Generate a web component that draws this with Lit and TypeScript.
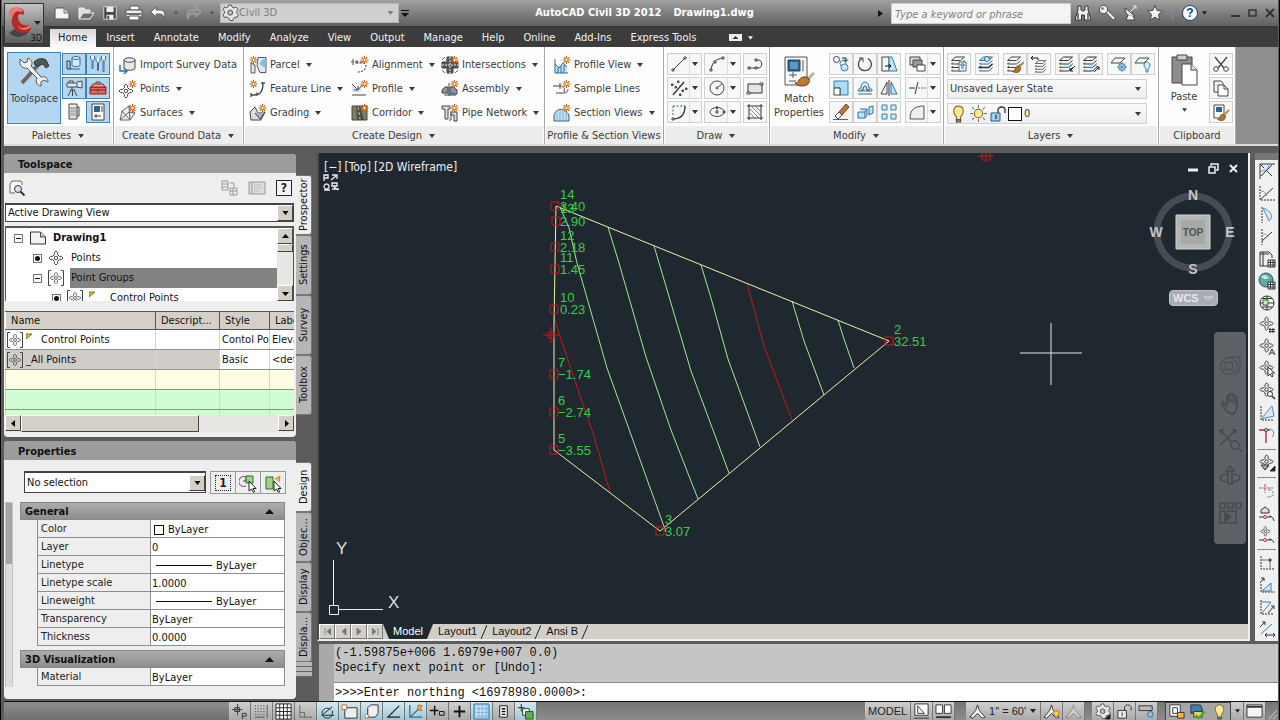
import { LitElement, html, svg, css, SVGTemplateResult, TemplateResult } from "lit";
import { customElement } from "lit/decorators.js";
import { classMap } from "lit/directives/class-map.js";

const spark = svg`<path d="M13.5 0v8M9.5 4h8M10.7 1.2l5.6 5.6M16.3 1.2l-5.6 5.6" stroke="#c8641a" stroke-width="1.1"/><circle cx="13.5" cy="4" r="1.4" fill="#fff6c8" stroke="#d8862e" stroke-width=".6"/>`;
const layers = svg`<path d="M5.5 2h9l-4 3.5h-9z"/><path d="M3 7.5L1.5 9h9l4-3.5M3 11l-1.5 1.5h9l4-3.5M3 14.5L1.5 16h9l4-3.5" fill="none"/>`;
const target = svg`<circle cx="9" cy="9" r="1.8"/><path d="M9 2l1.6 1.6v2L12.4 7.4h2L16 9l-1.6 1.6h-2l-1.8 1.8v2L9 16l-1.6-1.6v-2L5.6 10.6h-2L2 9l1.6-1.6h2L7.4 5.6v-2z"/>`;
const brush = svg`<path d="M17 6l-5 5" stroke="#b98b53" stroke-width="2"/><path d="M8 13c0-2 2-3 4-2.5l1.5 1.5c.5 2-1 4-3 4.5-2 .3-4-.5-5-1 2 0 2.5-1 2.5-2.5z" fill="#b5712c" stroke="#6b4218" stroke-width=".7"/>`;

const glyphs: Record<string, SVGTemplateResult> = {
  newFile: svg`<path d="M2 4h9l5 5v6H2z" fill="#f4f4f4" stroke="#555"/><path d="M11 4v5h5" fill="#ccc" stroke="#777"/>`,
  open: svg`<path d="M2 14V4h5l1.5 2H13v2" fill="#ddd" stroke="#eee"/><path d="M2 15l4-6h11l-4 6z" fill="#6d6d6d" stroke="#f4f4f4"/>`,
  save: svg`<path d="M2 2h14v14H2z" fill="#444" stroke="#ddd"/><path d="M5 2h8v6H5zM5 11h8v5H5z" fill="#eee" stroke="none"/><path d="M7 12v4" stroke="#444" stroke-width="2"/>`,
  print: svg`<path d="M5 2h9v4H5z" fill="#fff" stroke="#555"/><path d="M1 6h16v7H1z" fill="#eee" stroke="#555"/><path d="M2 10h14" stroke="#444" stroke-width="1.5"/><path d="M4 12h10v4H4z" fill="#fff" stroke="#555"/>`,
  undo: svg`<path d="M7 3L2 8l5 5v-3h4c3 0 4 2 4 5 2-5 0-9-4-9H7z" fill="#f4f4f4" stroke="#555" stroke-width=".8"/>`,
  redo: svg`<path d="M11 3l5 5-5 5v-3H7c-3 0-4 2-4 5-2-5 0-9 4-9h4z" fill="#8b8b8b" stroke="#b5b5b5" stroke-width=".8"/>`,
  gear: svg`<path d="M7.5 1h3l.5 2 2 1 2-1 2 2.5-1.2 1.8.2 2 1.5 1.5-1.5 2.5-2-.3-1.5 1.3-.5 2.2h-3L7.5 14l-1.8-1-2.2.5L2 11l1.5-1.7v-2L2 5.5 3.7 3l2 .8L7 3z" fill="#e6e6e6" stroke="#555"/><circle cx="9.2" cy="8.7" r="2.5" fill="#bbb" stroke="#555"/>`,
  binoculars: svg`<path d="M4 2h3v4l1.5 1h1L11 6V2h3v4l2.5 8v2h-6v-5h-3v5h-6v-2L4 6z" fill="#eee" stroke="#333"/><path d="M4 9v6M14 9v6" stroke="#555" stroke-width="1.5"/>`,
  key: svg`<path d="M8 8.5l7 7.5h2v-2.5L10 6.5" fill="#eee" stroke="#444"/><circle cx="5.5" cy="5.5" r="4.2" fill="#eee" stroke="#444"/><circle cx="4.5" cy="4.5" r="1.2" fill="#666" stroke="none"/>`,
  dish: svg`<path d="M3 4c0 6 4 9 10 8z" fill="#eee" stroke="#444"/><path d="M8 8l6-6M14 5V2h-3" stroke="#eee"/><path d="M6 11l-2 5h9l-2-4" fill="#eee" stroke="#444"/>`,
  star: svg`<path d="M9 1.5l2.2 5 5.3.5-4 3.6 1.2 5.4L9 13.2 4.3 16l1.2-5.4L1.5 7l5.3-.5z" fill="#f2f2f2" stroke="#444"/>`,
  survey: svg`<path d="M2 6v8h4M2 6h3v8" stroke="#333"/><path d="M7 3c0-2 8-2 8 0v7c0 2-8 2-8 0z" fill="#d3ebfa" stroke="#2e6f9c"/><path d="M7 3c0 2 8 2 8 0M6 14h9" stroke="#2e6f9c"/>`,
  pens: svg`<path d="M1.5 1v3L3 5.5v8h1v-8L5.5 4V1M7 3v3l1.5 1.5v8h1v-8L11 6V3M12.5 1v3L14 5.5v11h1v-11L16.5 4V1" stroke="#3b6f94" fill="#e7f4fc"/>`,
  transit: svg`<path d="M2 4h10v4H2zM12 3l5-1v7l-5-1M4 4V2h4v2" fill="#dcecf5"/><path d="M7 8v3M5 11h5M6 11l-3 6M9 11l3 6M7.5 11v6"/>`,
  toolbox: svg`<path d="M1 8h16v7H1z" fill="#e06a60" stroke="#7a231e"/><path d="M2 8l2-3h10l2 3z" fill="#f0a59d" stroke="#7a231e"/><path d="M7 5V3h4v2M1 11h16M9 10v3" stroke="#7a231e"/>`,
  panorama: svg`<path d="M4 1h8v15H4zM12 4h2v9h-2" fill="#eee"/><path d="M6 4v10M8 4v10M10 4v10M5 5h6M5 8h6M5 11h6" stroke="#888" stroke-width=".7"/>`,
  props: svg`<path d="M3 1h12v16H3z" fill="#fff"/><path d="M5 3h6v6H5z" fill="#2d6391" stroke="none"/><path d="M5 13h7M7 11v4M13 3v6" stroke="#444"/>`,
  importSurvey: svg`<path d="M5 4c0-3 11-3 11 0v8c0 3-11 3-11 0z" fill="#e7e7e7"/><path d="M5 4c0 3 11 3 11 0"/><path d="M1 9v6h6M5 12l3 3-3 3" stroke="#2873ab" stroke-width="1.5"/>`,
  points: svg`<g transform="translate(-2 2)">${target}</g>${spark}`,
  surface: svg`<path d="M1 16l2-9 7-5 6 7-5 7zM3 7l8 9M10 2l1 14M1 16L10 8l6 1" fill="#eee" stroke="#666"/>${spark}`,
  parcel: svg`<path d="M2 7l4 2v8H2zM9 1.5h8v15h-6L8 10z" fill="#dfe8ec" stroke="#556"/><path d="M10 8l4-5h2.5v9z" fill="#7cc3e8" stroke="none"/><g transform="translate(-9 0)">${spark}</g>`,
  feature: svg`<path d="M2 15h4c6 0 8-4 8-12M12 3h4M2 13v4" stroke-width="1.3"/><circle cx="8" cy="14" r="1"/><g transform="translate(-9 0)">${spark}</g>`,
  grading: svg`<path d="M1 8l5-5 3 6 7-1-4 8H2z" fill="#d7dde0"/><path d="M6 9l5 6 5-7" fill="#aab3b8"/>${spark}`,
  alignment: svg`<path d="M0 6h5M9 6h3M2 3v6" stroke-dasharray="3 1"/><path d="M5 7h6c4 0 5 3 3 6-2 3-5 3-8 3" stroke="#333" stroke-dasharray="2 1.5"/><circle cx="6" cy="6" r="1.2" fill="#fff"/>${spark}`,
  profile: svg`<path d="M1 5l5 5 4-3v5H1z" fill="#cfe6f5" stroke="none"/><path d="M1 4l6 6 4-5M7 10v-4M7 10h-4M1 15h14"/>${spark}`,
  corridor: svg`<path d="M1 2h15v14H1z" fill="#76806b" stroke="#444"/><path d="M5 2h4l4 14H6z" fill="#4a4a4a" stroke="none"/><path d="M7 3l2 12" stroke="#e6d83f" stroke-dasharray="3 2"/>${spark}`,
  intersection: svg`<path d="M6 1h6v5h5v6h-5v5H6v-5H1V6h5z" fill="#555" stroke="#444"/><path d="M9 1v16M1 9h16" stroke="#eee" stroke-dasharray="2 1"/><path d="M1 4l3-3M1 14l3 3M14 17l3-3" stroke="#2e7fb5"/>${spark}`,
  assembly: svg`<path d="M1 10l3-3h3v6H1zM9 7h3l4 3v4H9z" fill="#8b97a0"/><path d="M8 3v13M3 15h12" /><path d="M4 13h8" stroke="#2e7fb5"/>${spark}`,
  pipe: svg`<path d="M1 2h8v3H7v10H4V5H1zM9 8h7v9h-3v-6h-4" fill="#ddd"/><path d="M10 8v8H8" />${spark}`,
  profileView: svg`<path d="M2 8l4 4 4-5 4 4v6H2z" fill="#bfe0f4" stroke="none"/><path d="M2 3v14h13M2 8l4 4 4-5 4 4M5 12v5M8 10v7M11 9v8" stroke="#2f6d97"/>${spark}`,
  sample: svg`<path d="M0 6h7c4 0 5 3 4 6M3 13h8c4 0 4-4 4-4M7 3v6" stroke="#444"/>${spark}`,
  sectionViews: svg`<path d="M1 12c1-8 10-9 15-1v6H1z" fill="#bfe0f4" stroke="#456"/><path d="M4 9v8M7 7v10M10 7v10M13 9v8" stroke="#7fb3d4"/>${spark}`,
  line: svg`<path d="M3 15L15 3" stroke="#333"/><path d="M2 14h2v2H2zM14 2h2v2h-2z" fill="#fff"/>`,
  polyarc: svg`<path d="M3 15C4 7 8 4 15 3" stroke="#333"/><path d="M2 14h2v2H2zM6 6h2v2H6zM14 2h2v2h-2z" fill="#fff"/>`,
  pline: svg`<path d="M3 13h9c5 0 5-8 0-8H10" stroke="#333"/><path d="M2 12h2v2H2zM9 12h2v2H9zM9 4h2v2H9z" fill="#fff"/>`,
  multi: svg`<path d="M3 16L14 3" stroke="#333" stroke-width="1.3"/><path d="M1.5 5h1.500v1.500H1.500zM7.500 2h1.500v1.500H7.500zM5 7.500h1.500V9H5zM12 11h1.500v1.500H12zM15.500 9H17v1.500h-1.500zM9.500 15H11v1.500H9.500z" stroke="#333"/>`,
  circle: svg`<circle cx="9" cy="9" r="7" stroke="#444"/><circle cx="9" cy="9" r="1"/><path d="M10 8l4-3"/>`,
  rect: svg`<path d="M2 5h14v9H2z" fill="#e4e4e4" stroke="#333"/><path d="M1 13h3v2H1zM14 4h3v2h-3z" fill="#fff"/>`,
  arcDash: svg`<path d="M3 3h12M3 3v9" stroke="#2f6d97" stroke-dasharray="2 1.5"/><path d="M3 16c8 0 12-4 12-13" stroke="#333" stroke-width="1.3"/><path d="M2 15h2v2H2z" fill="#fff"/>`,
  ellipse: svg`<ellipse cx="9" cy="9" rx="7" ry="4.5"/><path d="M9 6v5M7 9h4M15 8h2v2h-2z"/><circle cx="9" cy="4.5" r="1"/>`,
  hatch: svg`<path d="M3 1v16M15 1v16M1 3h16M1 15h16" stroke="#333"/><path d="M4 10l5 5M4 6l9 9M6 4l9 9M10 4l5 5" stroke="#888"/>`,
  move: svg`<circle cx="4.5" cy="4.5" r="3"/><circle cx="11" cy="8.5" r="3" stroke="#2e7fb5"/><circle cx="12.5" cy="12.5" r="3.5" fill="#cdeafb" stroke="#2e7fb5"/><path d="M10 3h4v3M12 4.500l2 2 2-2" stroke="#222"/>`,
  rotate: svg`<path d="M12 3.5A6.500 6.500 0 1 1 6 3.400" stroke="#444" stroke-width="1.3"/><path d="M3 3h4v4" stroke="#444"/>`,
  stretch: svg`<path d="M2 2h7v14H2z"/><path d="M9 2h3l5 14H9z" fill="#bfe3f8" stroke="#2e7fb5"/><path d="M5 11h6M9 9l2 2-2 2" stroke="#111"/>`,
  front: svg`<path d="M2 2h10v8H2z" fill="#ddd"/><path d="M5 5h9v7H5z" fill="#9a9a9a"/><path d="M9 10h8v6H9z" fill="#fff"/>`,
  scale: svg`<path d="M2 2h14v14H8V9H2z" fill="#aedcf5" stroke="#2e7fb5"/><path d="M2 9h6v7H2z" fill="#fff"/>`,
  offset: svg`<path d="M2 15h14M2 12c0-2 2-3 3-3 0-8 8-8 8 0 2 0 3 1 3 3z" fill="#c9e6f7" stroke="#2e6f9c"/><path d="M5 12c0-1 1-1 2-1 0-5 4-5 4 0h3" stroke="#333"/>`,
  mirror: svg`<path d="M7 3v12H1z" fill="#f2f2f2"/><path d="M11 3v12h6z" fill="#bfe3f8" stroke="#2e6f9c"/><path d="M9 1v16" stroke="#333"/>`,
  trim: svg`<path d="M1 9h6M7 15l3-12" stroke="#333"/><path d="M10 9h8" stroke="#2e7fb5" stroke-dasharray="2 1"/>`,
  erase: svg`<path d="M1 16.5h15" stroke="#c33"/><path d="M3 13l4-4 3 3-4 4z" fill="#fff"/><path d="M7 9l7-8 3 3-7 8z" fill="#b07a40" stroke="#6b4218"/>`,
  explode: svg`<path d="M2 9h7v6H2zM4 6h7l-2 3M11 6v6l-2 3M13 4l4-1v7l-4 2z" fill="#bfe3f8" stroke="#2e6f9c"/>`,
  array: svg`<path d="M2 2h5v5H2zM11 2h5v5h-5zM2 11h5v5H2zM11 11h5v5h-5z" fill="#d6eefb" stroke="#2e7fb5"/>`,
  fillet: svg`<path d="M2 16C2 7 6 3 16 3v13z" fill="#eee" stroke="#555"/>`,
  layerProps: svg`<g stroke="#444">${layers}</g><path d="M9 7h7v9H9z" fill="#fff" stroke="#2f6d97"/><path d="M11 9h3v2h-3zM11 13h3" stroke="#2f6d97"/>`,
  layerMatch: svg`<g stroke="#2e6f9c" fill="#bfe3f8">${layers}</g><path d="M3 11l-1.5 1.5h9l4-3.5" stroke="#333" stroke-width="1.5"/><circle cx="9" cy="4" r="2.5" fill="#cfeafa" stroke="#2e6f9c"/>`,
  layerPaint: svg`<g stroke="#444">${layers}</g><g transform="translate(1 1)">${brush}</g>`,
  layerPrev: svg`<g transform="translate(4 4) scale(.82)" stroke="#444">${layers}</g><path d="M8 5V3H1M3 1L1 3l2 2" stroke="#111"/>`,
  layerIso: svg`<g stroke="#333">${layers}</g><path d="M3 11l-1.5 1.5h9l4-3.5" stroke="#2e7fb5" fill="#bfe3f8"/><path d="M17 11l-5 5M12 13v3h3" stroke="#111"/>`,
  layerUniso: svg`<g stroke="#333">${layers}</g><path d="M3 11l-1.5 1.5h9l4-3.5" stroke="#2e7fb5" fill="#bfe3f8"/><path d="M12 17l5-5M14 12h3v3" stroke="#111"/>`,
  layerFreeze: svg`<path d="M5 3h10l-5 5H1z"/><circle cx="12" cy="12" r="3.5" stroke="#2e7fb5" fill="#d8effb"/><path d="M12 7v10M7 12h10M8.5 8.5l7 7M15.5 8.5l-7 7" stroke="#2e7fb5" stroke-width=".7"/>`,
  layerOff: svg`<path d="M5 3h10l-5 5H1z"/><path d="M12 14c-4-4-1-7 1-7s5 3 1 7v3h-2z" fill="#d8effb" stroke="#2e7fb5"/>`,
  bulb: svg`<path d="M7 12C3 8 4 2 9 2s6 6 2 10v3H7z" fill="#fbe98f" stroke="#7a6a2c"/><path d="M7 15h4v2H7z" fill="#999"/>`,
  sun: svg`<circle cx="9" cy="9" r="4" fill="#fbe98f" stroke="#7a6a2c"/><path d="M9 1v3M9 14v3M1 9h3M14 9h3M3 3l2 2M13 13l2 2M15 3l-2 2M5 13l-2 2" stroke="#777"/>`,
  unlock: svg`<path d="M2 8h9v8H2z" fill="#9ed3f0" stroke="#1e5f8c"/><path d="M9 8V5c0-4 7-4 7 0v3M7 10v4" stroke="#333" stroke-width="1.3"/>`,
  cut: svg`<path d="M3 2l9 11M15 2L6 13" stroke="#444" stroke-width="1.3"/><circle cx="4" cy="14" r="2.3"/><circle cx="14" cy="14" r="2.3"/>`,
  copy: svg`<path d="M2 2h7l2 2v9H2z" fill="#f2f2f2"/><path d="M6 6h6l4 4v7H6z" fill="#fff"/><path d="M12 6v4h4"/>`,
  matchSmall: svg`<path d="M2 2h10v13H2z" fill="#fff"/><path d="M4 4h6v5H4z" fill="#2d6391" stroke="none"/><g transform="translate(0 1)">${brush}</g>`,
  point: target,
  pointGroup: svg`<path d="M4 1.5H1.5v15H4M14 1.5h2.5v15H14"/><g transform="translate(1.6 1.6) scale(.82)">${target}</g>`,
  drawing: svg`<path d="M1.5 3h10l5 5v7h-15z" fill="#f2f2f2" stroke="#333"/><path d="M11.5 3v5h5" fill="#ccc"/>`,
  preview: svg`<path d="M14 6V3l-1-1H4L2 5v9h5" fill="#f8f8f8" stroke="#666"/><circle cx="10" cy="10" r="3.5" fill="#dde" stroke="#333"/><path d="M12.5 12.5l4 4" stroke="#333" stroke-width="2"/>`,
  panorama2: svg`<path d="M1 2h6v9H1zM1 5h6M1 8h6M9 9h7v7H9zM9 12h7M12 9v7M9 4h4v4" stroke="#999"/>`,
  card: svg`<path d="M1 3h16v12H1zM4 3v12" fill="#ddd" stroke="#999"/><path d="M6 6h8M6 9h8M6 12h5" stroke="#bbb"/>`,
  help: svg`<path d="M1.5 1.5h15v15h-15z" fill="#f2f2f2" stroke="#222"/>`,
  selCycle: svg`<path d="M7 3a5 5 0 1 0 0 9M7 3v4H4" stroke="#444"/><path d="M7 2h7v7H7z" fill="#9fd28b" stroke="#356b2a"/>`,
  cursor: svg`<path d="M9 6v10l2.5-2 2 3.5 1.200-.8-1.700-3.200h3z" fill="#fff" stroke="#222"/>`,
};

const icon = (name: string, size = 18): TemplateResult => html`<svg
  class="ic" width=${size} height=${size} viewBox="0 0 18 18" fill="none" stroke="#444" aria-hidden="true"
>${glyphs[name]}</svg>`;

const caret = (size = 5): TemplateResult =>
  html`<svg class="caret" width=${size + 1} height="4" viewBox="0 0 6 4" aria-hidden="true"><path d="M0 0h6L3 4z" fill="currentColor"/></svg>`;

type Cmd = [icon: string, label: string, drop: boolean];

const menuTabs = ["Home", "Insert", "Annotate", "Modify", "Analyze", "View", "Output", "Manage", "Help", "Online", "Add-Ins", "Express Tools"];
const groundData: Cmd[] = [["importSurvey", "Import Survey Data", false], ["points", "Points", true], ["surface", "Surfaces", true]];
const design: Cmd[] = [
  ["parcel", "Parcel", true], ["feature", "Feature Line", true], ["grading", "Grading", true],
  ["alignment", "Alignment", true], ["profile", "Profile", true], ["corridor", "Corridor", true],
  ["intersection", "Intersections", true], ["assembly", "Assembly", true], ["pipe", "Pipe Network", true],
];
const views: Cmd[] = [["profileView", "Profile View", true], ["sample", "Sample Lines", false], ["sectionViews", "Section Views", true]];
const palettes: [string, string, boolean][] = [
  ["survey", "Prospector", true], ["pens", "Settings", true], ["transit", "Survey", true],
  ["toolbox", "Toolbox", true], ["panorama", "Panorama", false], ["props", "Properties", true],
];
const properties: [string, string, string][] = [
  ["Color", "swatch", "ByLayer"], ["Layer", "", "0"], ["Linetype", "rule", "ByLayer"], ["Linetype scale", "", "1.0000"],
  ["Lineweight", "rule", "ByLayer"], ["Transparency", "", "ByLayer"], ["Thickness", "", "0.0000"],
];

/* Survey points: node x, node y, point number, elevation, label x */
const nodes: [number, number, string, string, number][] = [
  [236, 53, "14", "3.40", 241], [237, 68, "", "2.90", 241], [236, 94, "12", "2.18", 241], [236, 116, "11", "1.45", 241],
  [235, 156, "10", "0.23", 241], [235, 221, "7", "−1.74", 239], [235, 259, "6", "−2.74", 239],
  [235, 297, "5", "−3.55", 239], [341, 378, "3", "3.07", 346], [570, 188, "2", "32.51", 575],
];
const contours: [string, boolean][] = [
  ["M241 54L250 75 258 110 288 215 347 379", false], ["M289 74L300 110 327 204 352 277 379 346", false],
  ["M335 93L346 130 372 218 410 320", false], ["M382 112L392 145 409 206 441 294", false],
  ["M428 130L445 193 473 267", true], ["M473 148L485 188 505 242", false], ["M519 167L525 186 535 215", false],
  ["M235 165L255 225 274 280 291 339", true],
];

const miniPoint = svg`<g transform="translate(0 -1) scale(.95)">${target}</g>`;
const sideTools: (SVGTemplateResult | null)[] = [
  svg`<path d="M2 17V2h15M2 2l12 12" /><path d="M3 9c4 1 8-2 8-7" fill="#cfe3f7" stroke="#6c9cc9"/><path d="M3 14L14 3"/>`,
  svg`<path d="M2 2v14h15" stroke-dasharray="2 1"/><path d="M3 15L15 4"/><path d="M3 7c4 0 5 3 6 5" stroke="#6c9cc9"/>`,
  svg`<path d="M4 1v16" stroke-dasharray="2 1"/><path d="M5 2c10 4 10 9 6 13z" fill="#d7e8f8" stroke="#5b87b0"/>`,
  svg`<path d="M4 1v16" stroke-dasharray="2 1"/><path d="M4 13L14 4"/><path d="M5 6c4 0 5 2 5 3" stroke="#6c9cc9"/>`,
  svg`<path d="M2 2h9l3 3v3M2 2v14h8M5 2v14M2 4h9" fill="none"/><path d="M10 10h7v7h-7zM10 12.5h7M10 15h7M12.5 10v7M15 10v7" fill="#fff"/>`,
  svg`<circle cx="8" cy="8" r="7" fill="#5fa8a8" stroke="#355"/><path d="M3 5c3-3 6-2 8 1-3 2-5 1-8-1z" fill="#cdeaea" stroke="none"/><path d="M10 10h7v7h-7zM10 12.5h7M10 15h7M12.5 10v7M15 10v7" fill="#fff"/>`,
  svg`<circle cx="9" cy="9" r="7" fill="#f4f4f4"/><path d="M2 9h14M9 2v14M4 4.5h10M4 13h10"/><path d="M5 6h5v5H5z" fill="#cfe8c8" stroke="#2f6a2a"/>`,
  svg`${miniPoint}<path d="M12 12v5M15 12v5M11 13.5h6M11 15.5h6"/>`,
  svg`${miniPoint}<path d="M11 17l3-6 3 6M12 15h4"/>`,
  svg`${miniPoint}<path d="M10 7v9l2-2 2 3 1-1-1.5-3h3z" fill="#fff"/>`,
  svg`${miniPoint}<circle cx="12" cy="12" r="2.5" fill="#fff"/><path d="M14 14l3 3" stroke-width="1.5"/>`,
  svg`<path d="M3 2v14h12" stroke-dasharray="2 1"/><path d="M3 15L14 2l2 10z" fill="#d7e8f8" stroke="#5b87b0"/>`,
  svg`<path d="M1 4h11M8 4v13" stroke="#a33" stroke-width="1.4"/><path d="M11 3c5 0 6 5 3 8" stroke="#4a9a8a"/><circle cx="8" cy="4" r="1.5" fill="#fff"/>`,
  null,
  svg`${miniPoint}<path d="M3 11h8l-4 5z" fill="#aaa"/><path d="M17 12v5h-5z" fill="#222"/>`,
  null,
  svg`<path d="M1 6h14M7 2v9" stroke="#b55" stroke-dasharray="3 1"/><path d="M10 8c5-1 6 3 5 5s-4 2-6 2" stroke="#4a9a8a" stroke-dasharray="3 1"/>`,
  svg`<path d="M3 6l4-3 4 3v3H3z" fill="#ddd"/><path d="M1 13h4M9 13h4M11 12c3 0 4 2 5 5"/><circle cx="7" cy="13" r="1.5" stroke="#a33"/>`,
  svg`<g transform="translate(1 -1) scale(.7)">${target}</g><path d="M1 14h4M9 14h4M11 13c3 0 4 2 5 4"/><circle cx="7" cy="14" r="1.5" stroke="#a33"/>`,
  null,
  svg`<path d="M3 2v13h13" stroke-dasharray="2 1"/><path d="M3 6h9v9" stroke="#3f7fb8"/><path d="M11 5h2v2h-2z"/>`,
  svg`<path d="M3 8v8h14" stroke-dasharray="2 1"/><path d="M2 7l4-5M6 5V2H3"/><path d="M4 15l9-8v8z" fill="#d7e8f8" stroke="#3f7fb8"/>`,
  svg`<path d="M3 2v14h13" stroke-dasharray="2 1"/><path d="M3 4h10L4 15" stroke="#3f7fb8"/><path d="M10 15l6-7M16 11V8h-3"/>`,
  svg`<path d="M2 7l5-5M7 5V2H4M7 15h10M9 13l-2 2 2 2M15 13l2 2-2 2"/><path d="M3 14L14 4" stroke="#3f7fb8"/>`,
];

const statusLeft: [string, boolean, SVGTemplateResult][] = [
  ["Infer constraints", false, svg`<path d="M1 7h11M7 1v12M4 5h5v4H4z"/><path d="M12 17v-6h4v3h-4"/>`],
  ["Snap mode", false, svg`<path d="M2 3h11M2 6h11M2 9h11M2 12h11" stroke-dasharray="1 2"/><path d="M15 2v14M2 15h10" stroke="#555"/>`],
  ["Grid display", false, svg`<path d="M1 1h16v16H1zM5 1v16M9 1v16M13 1v16M1 5h16M1 9h16M1 13h16" fill="#fff" stroke="#222"/>`],
  ["Ortho mode", false, svg`<path d="M3 2v13h13M3 10h5v5" stroke="#666"/>`],
  ["Polar tracking", true, svg`<path d="M3 13L14 4M3 13h13M14 8c1 4-1 8-5 8-5 0-7-4-5-8 2-3 6-3 8-1" stroke="#222"/>`],
  ["Object snap", true, svg`<path d="M4 5h13v11H4z" fill="#eee"/><path d="M1 2h5v5H1z" fill="#fff" stroke="#b64"/>`],
  ["3D object snap", true, svg`<path d="M5 5l3-3h8v9l-3 4H5z" fill="#eee"/><circle cx="4" cy="14" r="2" fill="#fff" stroke="#b64"/>`],
  ["Object snap tracking", true, svg`<path d="M15 3L3 15h13" stroke="#222" stroke-width="1.3"/>`],
  ["Dynamic UCS", true, svg`<path d="M3 2v13h13M3 15L13 6" stroke="#2f6d97" stroke-width="1.3"/><path d="M12 2l4 1-2 3 2 2-5-1z" fill="#f0b73c" stroke="#a86c10"/>`],
  ["Dynamic input", false, svg`<path d="M1 8h9M6 3v10" stroke="#111" stroke-width="1.5"/><path d="M11 9h5v4h-5z" stroke="#111"/>`],
  ["Lineweight", false, svg`<path d="M3 9h12M9 3v12" stroke="#111" stroke-width="2"/>`],
  ["Transparency", true, svg`<path d="M1 1h16v16H1z" fill="#a8cbea" stroke="#2873ab"/><path d="M3 4h12M3 8h12M3 12h12" stroke="#d6e8f7" stroke-width="2" stroke-dasharray="2 2"/><path d="M5 6h10M5 10h10M5 14h10" stroke="#6c9bc9" stroke-dasharray="2 2"/>`],
  ["Quick properties", false, svg`<path d="M5 3h8v12H5z" fill="#fff" stroke="#111"/><path d="M7 6h4M7 9h4M7 12h4" stroke="#111" stroke-width="1.5"/>`],
  ["Selection cycling", true, svg`<path d="M1 5h7M4.5 1v8" stroke="#222"/><path d="M6 6h7v7H6z" fill="#fff"/><path d="M9 9h8v8H9z" fill="#5ab04a" stroke="#245a1a"/>`],
];

@customElement("app-root")
export class AppRoot extends LitElement {
  static styles = css`
    :host {
      display: flex; flex-direction: column; height: 100vh; min-height: 480px; overflow: hidden;
      padding: 0 1px; background: #5c5c5c; color: #222; border-inline: 1px solid #000;
      font: 11px/14px "DejaVu Sans Condensed", "Noto Sans", sans-serif; box-sizing: border-box;
    }
    *, *::before, *::after { box-sizing: border-box; }
    button, input, select { font: inherit; color: inherit; margin: 0; padding: 0; border: 0; background: none; border-radius: 0; }
    button { display: flex; align-items: center; justify-content: center; white-space: nowrap; }
    select { appearance: none; }
    svg { display: block; flex: none; }

    /* title bar */
    .title-bar { position: relative; display: flex; align-items: center; height: 27px; flex: none; padding-left: 48px;
      background: linear-gradient(#a2a2a2, #7c7c7c 55%, #606060); border-bottom: 1px solid #333; }
    .app-button { position: absolute; z-index: 2; left: 2px; top: 3px; width: 40px; height: 41px;
      background: linear-gradient(#c4c4c4, #858585 60%, #5d5d5d); border: 1px solid #333; }
    .app-button svg { position: absolute; left: 0; top: 0; }
    .app-button span { position: absolute; right: 1px; bottom: -2px; font-size: 9px; color: #111; }
    .qat { display: flex; align-items: center; }
    .qat button { width: 24px; height: 24px; color: #444; }
    .qat button.slim { width: 12px; }
    .picker { display: grid; grid-template-columns: 1fr; align-items: center; }
    .picker > select, .picker > svg, .picker > .drop { grid-area: 1 / 1; }
    .picker > svg, .picker > .drop { justify-self: end; margin-right: 4px; pointer-events: none; }
    .picker select { width: 100%; height: 100%; }
    .workspace { width: 179px; height: 20px; background: #cfcfcf; color: #808080; border: 1px solid #b5b5b5; margin-left: 2px; }
    .workspace > svg.ic { justify-self: start; }
    .workspace select { padding-left: 18px; }
    .caption { flex: 1; display: flex; justify-content: center; gap: 12px; color: #fff; font-weight: bold; white-space: nowrap; }
    .search { width: 180px; height: 21px; margin-left: 8px; background: #f4f4f4; border: 1px solid #ccc; padding: 2px 4px 0 3px; font-style: italic; }
    .search::placeholder { color: #808080; opacity: 1; }
    .info { display: flex; align-items: center; }
    .info button { width: 24px; height: 24px; }
    .info .sep { width: 1px; height: 16px; background: #8a8a8a; margin: 0 5px; }
    .help-badge { width: 16px; height: 16px; border-radius: 50%; background: #fff; border: 1px solid #1f3f7a; color: #173f8a; font: bold 12px/14px "Liberation Sans", sans-serif; text-align: center; }
    .window { display: flex; margin-left: 20px; }
    .info .window button { width: 17px; }

    /* menu tabs */
    .tabs { display: flex; align-items: flex-end; height: 20px; flex: none; background: #3c3c3c; padding-left: 48px; color: #f2f2f2; }
    .tabs button { height: 18px; padding: 0 9px 1px 10px; }
    .tabs button.on { background: linear-gradient(#d8d8d8, #fcfcfc); color: #222; padding: 0 9px 1px 8px; }
    .tabs .min { padding: 0 0 1px 24px; gap: 6px; }

    /* ribbon */
    .ribbon { display: flex; height: 99px; flex: none; margin-left: 2px; background: linear-gradient(90deg, #b4b4b4, #8e8e8e); border-bottom: 2px solid #ddd; color: #3c3c3c; }
    .panel { display: flex; flex-direction: column; background: #fdfdfd; border-right: 1px solid #a8a8a8; }
    .panel > .body { flex: 1; display: flex; padding: 6px 3px 0; gap: 4px; }
    .panel > .foot { height: 18px; background: #ededed; gap: 6px; margin: 0 1px; padding-top: 1px; }
    .grid { display: grid; grid-auto-rows: 22px; gap: 2px; align-content: start; }
    .cmds { display: grid; grid-template-rows: repeat(3, 24px); grid-auto-flow: column; align-content: start; justify-content: start; }
    .cmds button { justify-content: flex-start; gap: 3px; }
    .cmds .caret { margin-left: 3px; }
    .p-ground { min-width: 130px; } .p-design { min-width: 301px; } .p-views { min-width: 119px; }
    .p-design .cmds { grid-template-columns: 102px 90px auto; }
    .panel.p-ground > .body, .panel.p-design > .body { padding: 6px 0 0 5px; }
    .panel.p-views > .body { padding: 6px 0 0 8px; }
    .big { flex-direction: column; line-height: 14px; gap: 4px; }
    .panel.p-palettes > .body { gap: 1px; padding-top: 5px; }
    .big.toolspace { width: 54px; height: 72px; background: #b3d6f1; border: 1px solid #3c83b8; padding-bottom: 14px; }
    .pal { grid-template-columns: 24px 24px; gap: 2px 0; padding-top: 1px; }
    .pal button.on { background: #b3d6f1; border: 1px solid #3c83b8; }
    .tool { border: 1px solid #d0d0d0; background: #f7f7f7; }
    .split { gap: 1px; }
    .p-draw .grid { grid-template-columns: 35px 37px 24px; }
    .panel.p-draw > .body { padding-right: 2px; }
    .m3 { grid-template-columns: repeat(3, 24px); gap: 2px 0; }
    .m1 { grid-template-columns: 36px; }
    .big.match { width: 52px; height: 70px; white-space: normal; }
    .panel.p-modify > .body { padding: 6px 2px 0 3px; gap: 4px; }
    .lay { display: flex; flex-direction: column; gap: 4px; }
    .lay .icons { display: flex; gap: 4px; height: 22px; }
    .lay .pair { display: flex; }
    .lay .tool { width: 24px; }
    .combo { width: 200px; height: 20px; border: 1px solid #cfcfcf; background: linear-gradient(#fafafa, #eee); }
    .combo select { padding-left: 2px; }
    .combo.layer { height: 21px; grid-template-columns: auto 1fr; }
    .combo.layer .set { display: flex; align-items: center; gap: 1px; padding-left: 1px; }
    .combo.layer > select, .combo.layer > svg { grid-area: 1 / 2; }
    .swatch { width: 14px; height: 14px; border: 1px solid #111; background: #fff; }
    .panel.p-clip > .body { padding: 6px 2px 0 9px; gap: 9px; }
    .big.paste { width: 32px; height: 60px; }
    .p-clip .grid { grid-template-columns: 24px; }

    /* work area */
    .work { flex: 1; min-height: 0; display: grid; grid-template-columns: 315px minmax(0, 1fr); padding-top: 7px; }
    .dock { display: flex; flex-direction: column; gap: 4px; min-height: 0; padding: 1px 1px 2px 2px; }
    .palette { display: grid; grid-template-columns: 292px 17px; min-height: 0; }
    .palette.one { flex: 284 1 0; } .palette.two { flex: 258 1 0; }
    .face { display: flex; flex-direction: column; min-height: 0; border-radius: 4px; background: #eee; overflow: hidden; }
    .face h2 { display: flex; align-items: center; gap: 7px; margin: 0; height: 19px; flex: none; padding: 2px 0 0 3px; background: #9c9c9c; color: #111; font-size: 11px; line-height: 16px; }
    .grip { width: 4px; height: 11px; background: radial-gradient(#222 40%, transparent 45%) 0 0 / 2px 2px; }
    .rail { display: flex; flex-direction: column; padding-top: 21px; min-height: 0; overflow: hidden; }
    .rail button { writing-mode: vertical-rl; transform: rotate(180deg); height: 60px; flex: none; width: 16px; background: #b6b6b6; border: 1px solid #777; border-right: 0; border-radius: 3px 0 0 3px; color: #111; }
    .rail button.on { background: #eee; }
    .rail.short button { height: 50px; }
    .rail .stub { width: 16px; height: 5px; flex: none; background: #b6b6b6; border-bottom: 1px solid #666; }
    .bar { display: flex; align-items: center; height: 30px; flex: none; padding: 0 3px 0 4px; gap: 9px; }
    .bar .grow { flex: 1; }
    .bar button { position: relative; }
    .bar b { position: absolute; inset: 0; text-align: center; font-size: 12px; line-height: 18px; }
    .field { background: #fff; border: 1px solid #444; border-top-width: 2px; }
    .field select { padding-left: 2px; }
    .drop { width: 16px; height: 16px; display: grid; place-items: center; background: #d4d0c8; border: 1px solid #fff; border-right-color: #444; border-bottom-color: #444; color: #000; }
    .field.picker > .drop { margin-right: 0; }
    .field.view { height: 19px; flex: none; margin: 0 2px 4px 1px; color: #111; }
    .tree { display: grid; grid-template-columns: 1fr 16px; height: 75px; flex: none; margin: 0 2px 10px 1px; background: #fff; border: 1px solid #555; border-top-width: 2px; border-bottom: 0; overflow: hidden; color: #111; }
    .tree ul { list-style: none; margin: 0; padding: 0; min-width: 0; overflow: hidden; }
    .tree li { display: flex; align-items: center; height: 20px; gap: 5px; white-space: nowrap; }
    .tree .lv0 { padding-left: 8px; gap: 6px; font-weight: bold; } .tree .lv1 { padding-left: 27px; } .tree .lv2 { padding-left: 46px; }
    .tree .name { flex: 1; padding: 3px 0 3px 1px; }
    .tree .hit { background: #828282; }
    .tree .lv2 .name { padding-left: 10px; }
    .box { width: 9px; height: 9px; border: 1px solid #777; background: #fff; flex: none; display: grid; place-items: center; }
    .box::before { content: ""; width: 5px; height: 1px; background: #111; }
    .box.shut::before { width: 5px; height: 5px; border-radius: 50%; }
    .vbar { display: flex; flex-direction: column; background: #e8e6e2; }
    .vbar .thumb { height: 8px; background: #d4d0c8; border: 1px solid #fff; border-bottom-color: #444; border-right-color: #444; }
    .vbar .gap { flex: 1; }
    .list { flex: 1; min-height: 0; margin: 0 2px 0 1px; background: #d4fad4; overflow: hidden; }
    .list table { width: 330px; table-layout: fixed; border-collapse: collapse; color: #111; }
    .list .c1 { width: 150px; } .list .c2 { width: 64px; } .list .c3 { width: 50px; } .list .c4 { width: 66px; }
    .list th { height: 18px; background: #d4d0c8; font-weight: normal; text-align: left; padding: 0 0 0 5px; border: 1px solid #555; border-left-color: #fff; }
    .list td { height: 20px; padding: 0 0 0 2px; border: 1px solid #e6cfc6; border-bottom: 1px solid #889488; background: #fff; white-space: nowrap; overflow: hidden; }
    .list td:first-child { padding-left: 0; }
    .list .cell { display: flex; align-items: center; gap: 2px; }
    .list .cell .pad { width: 5px; }
    .list .sel td.mark { background: #d0ccc8; }
    .list .y td { background: #fffde4; } .list .g td { background: #d2fdd2; }
    .hbar { display: flex; height: 17px; flex: none; margin: 0 2px 5px 1px; background: #e8e6e2; }
    .hbar .thumb { width: 178px; background: #d4d0c8; border: 1px solid #fff; border-right-color: #444; border-bottom-color: #444; }
    .hbar .gap { flex: 1; }
    .pick { display: flex; gap: 5px; padding: 11px 10px 8px 20px; flex: none; }
    .pick .field { flex: 1; height: 22px; color: #111; }
    .trio { display: flex; }
    .trio button { position: relative; width: 26px; height: 23px; border: 1px solid #999; margin-left: -1px; flex: none; }
    .trio svg.over { position: absolute; left: 4px; top: 3px; }
    .one-box { width: 16px; height: 16px; border: 1px dotted #222; font-weight: bold; font-size: 12px; line-height: 14px; }
    .sheet { flex: 1; min-height: 0; display: grid; grid-template-columns: 8px 1fr; gap: 7px; padding: 0 11px 0 1px; overflow: hidden; margin-bottom: 12px; }
    .track { background: linear-gradient(#a5a5a5 61px, #ddd 61px); border: 1px solid #c4c4c4; }
    .group { display: flex; align-items: center; justify-content: space-between; height: 18px; width: 100%; padding: 1px 10px 0 4px; background: linear-gradient(#acacac, #8e8e8e); border: 1px solid #888; color: #111; font-weight: bold; }
    .sheet table { width: 100%; padding-left: 17px; border-spacing: 0; margin-bottom: 4px; }
    .sheet th, .sheet td { height: 18px; padding: 0 0 0 3px; font-weight: normal; text-align: left; border-bottom: 1px solid #8e8e8e; border-left: 1px solid #8e8e8e; }
    .sheet th { width: 113px; line-height: 17px; }
    .sheet td { background: #fff; border-right: 1px solid #8e8e8e; color: #111; padding-left: 1px; }
    .val { display: flex; align-items: center; gap: 4px; height: 17px; padding-top: 2px; }
    .val .sw { width: 10px; height: 10px; border: 1px solid #111; margin-left: 2px; }
    .val .rule { width: 56px; height: 1px; background: #111; margin-left: 4px; }

    .right { display: flex; flex-direction: column; min-width: 0; min-height: 0; }
    .upper { flex: 1; display: flex; min-height: 0; gap: 5px; margin-bottom: 3px; }
    .doc { flex: 1; display: flex; flex-direction: column; min-width: 0; border-right: 2px solid #eee; border-bottom: 2px solid #eee; border-left: 2px solid #4c4c4c; }
    .canvas { position: relative; flex: 1; min-height: 0; background: #20282f; overflow: hidden; color: #eee; font-size: 12px; }
    .canvas > .plot { position: absolute; inset: 0; width: 100%; height: 100%; }
    .pt { fill: #3ccb49; font: 13px "Liberation Sans", sans-serif; }
    .vp { position: absolute; left: 5px; top: 7px; display: flex; gap: 3px; }
    .vp-icon { position: absolute; left: 4px; top: 21px; }
    .docwin { position: absolute; right: 5px; top: 6px; display: flex; }
    .docwin button { width: 20px; height: 18px; }
    .cube { position: absolute; right: 9px; top: 34px; }
    .cube text { font: bold 14px "Liberation Sans", sans-serif; fill: #c2c6c8; text-anchor: middle; }
    .cube text.top { font-size: 10px; fill: #555; }
    .wcs { position: absolute; right: 30px; top: 137px; width: 49px; height: 16px; border-radius: 4px; background: #a9acb2; border: 1px solid #c2c5c8; color: #e8eaec; gap: 4px; justify-content: flex-start; padding-left: 3px; font: bold 11px/14px "Liberation Sans", sans-serif; }
    .navbar { position: absolute; right: 2px; top: 179px; width: 32px; height: 212px; padding-top: 14px; border-radius: 4px; background: #5d6266; }
    .navbar button { width: 32px; height: 37px; }
    .ucs { position: absolute; left: 0; bottom: 0; }
    .ucs text { font: 17px "Liberation Sans", sans-serif; fill: #ddd; }
    .sheets { display: flex; height: 15px; flex: none; background: #d2cfc8; font: 11px/15px "Liberation Sans", sans-serif; color: #111; }
    .sheets .nav { width: 16px; border: 1px solid #fff; border-right-color: #777; border-bottom-color: #777; color: #777; }
    .sheets .model { width: 50px; background: #20282f; color: #fff; clip-path: polygon(0 0, 100% 0, 44px 100%, 6px 100%); }
    .sheets .leaf { padding-left: 5px; gap: 3px; }
    .side { width: 23px; flex: none; display: flex; flex-direction: column; align-items: center; background: #f0f0f0; }
    .side .hold { width: 100%; height: 7px; background: #777; display: grid; place-items: center; }
    .side .hold::before { content: ""; width: 14px; height: 4px; background: radial-gradient(#111 40%, transparent 45%) 0 0 / 2px 2px; }
    .side button { width: 22px; height: 22px; flex: none; }
    .side hr { width: 19px; height: 1px; border: 0; background: #888; margin: 3px 0 2px; flex: none; }

    .cmd { display: grid; grid-template-columns: 15px 1fr; flex: none; background: #a9a9a9; margin-left: 2px; font: 12px/15px "Liberation Mono", monospace; color: #111; }
    .cmd .handle { width: 12px; height: 4px; margin: 4px 2px; background: radial-gradient(#222 40%, transparent 45%) 0 0 / 2px 2px; }
    .cmd .log { background: #c5c5c5; margin: 0; font: inherit; padding: 2px 0 6px 1px; height: 39px; border-bottom: 1px solid #888; }
    .cmd input { display: block; width: 100%; height: 18px; background: #fff; padding: 2px 0 0 1px; }

    /* status bar */
    .status { display: flex; align-items: stretch; height: 19px; flex: none; border-top: 1px solid #111; margin-left: 2px; background: linear-gradient(#757575, #8c8c8c); color: #222; }
    .status .run { display: flex; }
    .status .lead { width: 225px; background: linear-gradient(#8e8e8e, #707070); }
    .status .grow { flex: 1; }
    .status button { width: 22px; background: linear-gradient(#cfcfcf, #aaa); border-right: 1px solid #777; overflow: hidden; }
    .status button.on { background: linear-gradient(#d4e9f1, #9fc8d6); }
    .status button.wide { width: auto; padding: 0 3px; font: 11px/16px "Liberation Sans", sans-serif; gap: 3px; }
    .status .space { width: 11px; } .status .thin { width: 7px; }
    .status .tray { display: flex; align-items: center; width: 66px; justify-content: space-around; background: #a6a6a6; border: 1px solid #444; border-bottom: 0; }
    .status button.slim { width: 13px; }
  `;

  private cmd = ([ic, label, drop]: Cmd) => html`<button>${icon(ic)}<span>${label}</span>${drop ? caret() : ""}</button>`;

  private tool = (ic: string, label: string, split = false) =>
    html`<button class=${classMap({ tool: true, split })} aria-label=${label}>${icon(ic)}${split ? html`<svg width="11" height="20" viewBox="0 0 11 20"><path d="M.5 0v20" stroke="#dcdcdc"/><path d="M3 8h6l-3 4z" fill="#333"/></svg>` : ""}</button>`;

  private foot = (label: string, drop = true) => html`<button class="foot">${label}${drop ? caret(7) : ""}</button>`;

  private titleBar() {
    return html`<header class="title-bar">
      <button class="app-button" aria-label="Application menu">
        <svg width="38" height="38" viewBox="0 0 38 38"><path d="M4 29C12 36 22 33 26 24l-7 1-7-2z" fill="#222" opacity=".6"/><path d="M4 11C3 6 9 2 15 4c4 1 5 5 3 7-2-2-5-1-5 2 0 5 4 10 12 8l1 4c-5 6-13 5-17-1-3-4-3-9-1-12-1-1-3-1-4-1z" fill="#b52a28"/><path d="M4 11C3 6 9 2 15 4c3 1 3 3 2 4-5-2-8 0-9 4-1-1-3-1-4-1zM12 21c4 5 9 3 13 0l1 2c-5 4-11 4-14-2z" fill="#ef7a72"/><path d="M29 17h7l-3.5 4z" fill="#222"/></svg>
        <span>3D</span>
      </button>
      <div class="qat">
        <button aria-label="New">${icon("newFile")}</button><button aria-label="Open">${icon("open")}</button>
        <button aria-label="Save">${icon("save", 16)}</button><button aria-label="Print">${icon("print")}</button>
        <button aria-label="Undo">${icon("undo")}</button><button class="slim" aria-label="Undo list">${caret(3)}</button>
        <button aria-label="Redo">${icon("redo")}</button><button class="slim" aria-label="Redo list">${caret(3)}</button>
        <div class="picker workspace"><select aria-label="Workspace"><option>Civil 3D</option></select>${icon("gear")}${caret(6)}</div>
        <button class="slim" aria-label="Customize"><svg width="8" height="7" viewBox="0 0 8 7"><path d="M0 0h8v1H0zM0 3h8L4 7z" fill="#111"/></svg></button>
      </div>
      <div class="caption"><span>AutoCAD Civil 3D 2012</span><span>Drawing1.dwg</span></div>
      <svg width="5" height="7" viewBox="0 0 5 7"><path d="M0 0v7l5-3.5z" fill="#111"/></svg>
      <input class="search" placeholder="Type a keyword or phrase" aria-label="Search" />
      <div class="info">
        <button aria-label="Find">${icon("binoculars")}</button><button aria-label="Subscription">${icon("key")}</button>
        <button aria-label="Communication">${icon("dish")}</button><button aria-label="Favorites">${icon("star")}</button>
        <span class="sep"></span>
        <button aria-label="Help"><span class="help-badge">?</span></button>${caret(4)}
        <div class="window">
          <button aria-label="Minimize"><svg width="11" height="11"><path d="M1 8h9" stroke="#333" stroke-width="2"/></svg></button>
          <button aria-label="Restore"><svg width="10" height="9"><path d="M1 1h7v6H1z" fill="none" stroke="#333" stroke-width="1.5"/></svg></button>
          <button aria-label="Close"><svg width="10" height="10"><path d="M1 1l8 8M9 1L1 9" stroke="#333" stroke-width="2"/></svg></button>
        </div>
      </div>
    </header>`;
  }

  private ribbon() {
    const t = this.tool;
    return html`<div class="ribbon">
      <section class="panel p-palettes"><div class="body">
        <button class="big toolspace">
          <svg width="34" height="32" viewBox="0 0 34 32"><path d="M5 27L22 8" stroke="#7a5f58" stroke-width="4"/><path d="M17 6c4-4 9-4 12-2l3 6-3 2-3-4-5 2-3-1z" fill="#555" stroke="#333"/><path d="M3 3l4 4 3-1 1-4c4 2 5 5 3 8l10 11c4-1 7 1 7 5l-4-2-3 2v4c-4-1-6-4-4-8L10 12c-4 1-8-2-7-9z" fill="#f4f4f4" stroke="#555"/></svg>
          Toolspace
        </button>
        <div class="grid pal">${palettes.map(([i, l, on]) => html`<button class=${classMap({ on })} aria-label=${l}>${icon(i)}</button>`)}</div>
      </div>${this.foot("Palettes")}</section>
      <section class="panel p-ground"><div class="body"><div class="cmds">${groundData.map(this.cmd)}</div></div>${this.foot("Create Ground Data")}</section>
      <section class="panel p-design"><div class="body"><div class="cmds">${design.map(this.cmd)}</div></div>${this.foot("Create Design")}</section>
      <section class="panel p-views"><div class="body"><div class="cmds">${views.map(this.cmd)}</div></div>${this.foot("Profile & Section Views", false)}</section>
      <section class="panel p-draw"><div class="body"><div class="grid">
        ${t("line", "Line", true)}${t("polyarc", "Arc", true)}${t("pline", "Polyline")}
        ${t("multi", "Points", true)}${t("circle", "Circle", true)}${t("rect", "Rectangle")}
        ${t("arcDash", "Curve", true)}${t("ellipse", "Ellipse", true)}${t("hatch", "Hatch")}
      </div></div>${this.foot("Draw")}</section>
      <section class="panel p-modify"><div class="body">
        <button class="big match">
          <svg width="32" height="32" viewBox="0 0 32 32" fill="none"><path d="M2 1h22v28H2z" fill="#f8f8f8" stroke="#555"/><path d="M5 4h12v11H5z" fill="#2d6391" stroke="#1b4567"/><path d="M7 6h8v7H7z" fill="#5e96c5"/><path d="M20 4v11M6 19h8M10 16v6M6 25h7" stroke="#555"/><path d="M31 17l-6 6" stroke="#b9b2a8" stroke-width="3"/><path d="M16 24c3-4 8-4 10-1 2 4-3 7-7 7-3 0-5-1-7-3 2 0 3-1 4-3z" fill="#c07a2c" stroke="#6b4218"/></svg>
          Match Properties
        </button>
        <div class="grid m3">
          ${t("move", "Move")}${t("rotate", "Rotate")}${t("stretch", "Stretch")}
          ${t("scale", "Scale")}${t("offset", "Offset")}${t("mirror", "Mirror")}
          ${t("erase", "Erase")}${t("explode", "Explode")}${t("array", "Array")}
        </div>
        <div class="grid m1">${t("front", "Draw order", true)}${t("trim", "Trim", true)}${t("fillet", "Fillet", true)}</div>
      </div>${this.foot("Modify")}</section>
      <section class="panel p-layers"><div class="body"><div class="lay">
        <div class="icons">
          ${t("layerProps", "Layer properties")}${t("layerMatch", "Make current")}
          <div class="pair">${t("layerPaint", "Match layer")}${t("layerPrev", "Previous")}</div>
          <div class="pair">${t("layerIso", "Isolate")}${t("layerUniso", "Unisolate")}</div>
          <div class="pair">${t("layerFreeze", "Freeze")}${t("layerOff", "Off")}</div>
        </div>
        <div class="picker combo"><select aria-label="Layer state"><option>Unsaved Layer State</option></select>${caret(7)}</div>
        <div class="picker combo layer"><div class="set">${icon("bulb", 19)}${icon("sun", 19)}${icon("unlock", 18)}<span class="swatch"></span></div>
          <select aria-label="Layer"><option>0</option></select>${caret(7)}</div>
      </div></div>${this.foot("Layers")}</section>
      <section class="panel p-clip"><div class="body">
        <button class="big paste">
          <svg width="28" height="32" viewBox="0 0 28 32"><path d="M2 3h20v26H2z" fill="#8d8d8d" stroke="#444"/><path d="M7 1h10v5H7z" fill="#ccc" stroke="#444"/><path d="M12 10h9l6 6v15H12z" fill="#fff" stroke="#444"/><path d="M21 10v6h6" fill="#ddd" stroke="#444"/></svg>
          <span>Paste</span>${caret(4)}
        </button>
        <div class="grid">${t("cut", "Cut")}${t("copy", "Copy")}${t("matchSmall", "Paste special")}</div>
      </div>${this.foot("Clipboard", false)}</section>
    </div>`;
  }

  private arrow(d: string) {
    return html`<button class="drop" aria-label="Scroll"><svg width="7" height="7" viewBox="0 0 7 7"><path d=${d} fill="#000"/></svg></button>`;
  }

  private toolspace() {
    const pen = html`<svg width="6" height="14" viewBox="0 0 6 14"><path d="M0 1h6L0 6z" fill="#e0c030" stroke="#6b5a10" stroke-width=".8"/></svg>`;
    return html`<section class="palette one">
      <div class="face">
        <h2><span class="grip"></span>Toolspace</h2>
        <div class="bar">
          <button aria-label="Preview">${icon("preview")}</button><span class="grow"></span>
          <button aria-label="Panorama">${icon("panorama2")}</button><button aria-label="Item view">${icon("card")}</button>
          <button aria-label="Help">${icon("help")}<b>?</b></button>
        </div>
        <div class="picker field view"><select aria-label="View"><option>Active Drawing View</option></select><span class="drop">${caret(6)}</span></div>
        <div class="tree">
          <ul>
            <li class="lv0"><span class="box"></span>${icon("drawing")}<span>Drawing1</span></li>
            <li class="lv1"><span class="box shut"></span>${icon("point")}<span class="name">Points</span></li>
            <li class="lv1"><span class="box"></span>${icon("pointGroup")}<span class="name hit">Point Groups</span></li>
            <li class="lv2"><span class="box shut"></span>${icon("pointGroup")}${pen}<span class="name">Control Points</span></li>
          </ul>
          <div class="vbar">${this.arrow("M0 5h7L3.5 1z")}<span class="thumb"></span><span class="gap"></span>${this.arrow("M0 2h7L3.5 6z")}</div>
        </div>
        <div class="list"><table>
          <colgroup><col class="c1" /><col class="c2" /><col class="c3" /><col class="c4" /></colgroup>
          <thead><tr><th>Name</th><th>Descript...</th><th>Style</th><th>Label Style</th></tr></thead>
          <tbody>
            <tr><td><span class="cell">${icon("pointGroup")}${pen}<span class="pad"></span>Control Points</span></td><td></td><td>Contol Po</td><td>Elevation</td></tr>
            <tr class="sel"><td class="mark"><span class="cell">${icon("pointGroup")}_All Points</span></td><td class="mark"></td><td>Basic</td><td>&lt;default&gt;</td></tr>
            <tr class="y"><td></td><td></td><td></td><td></td></tr>
            <tr class="g"><td></td><td></td><td></td><td></td></tr>
            <tr class="g"><td></td><td></td><td></td><td></td></tr>
          </tbody>
        </table></div>
        <div class="hbar">${this.arrow("M5 0v7L1 3.5z")}<span class="thumb"></span><span class="gap"></span>${this.arrow("M2 0v7l4-3.5z")}</div>
      </div>
      <nav class="rail"><button class="on">Prospector</button><button>Settings</button><button>Survey</button><button>Toolbox</button></nav>
    </section>`;
  }

  private propertiesPalette() {
    const up = html`<svg width="9" height="5" viewBox="0 0 9 5"><path d="M0 5h9L4.5 0z" fill="#111"/></svg>`;
    return html`<section class="palette two">
      <div class="face">
        <h2><span class="grip"></span>Properties</h2>
        <div class="pick">
          <div class="picker field"><select aria-label="Selection"><option>No selection</option></select><span class="drop">${caret(6)}</span></div>
          <div class="trio">
            <button aria-label="Toggle pickadd"><span class="one-box">1</span></button>
            <button aria-label="Select objects">${icon("selCycle")}<svg class="over" width="18" height="18" viewBox="0 0 18 18">${glyphs.cursor}</svg></button>
            <button aria-label="Quick select"><svg width="18" height="18" viewBox="0 0 18 18"><path d="M2 3h7v12H2z" fill="#9fd28b" stroke="#356b2a"/><path d="M11 5l5-3-1 6" fill="#f0b73c" stroke="#c5902c"/></svg><svg class="over" width="18" height="18" viewBox="0 0 18 18">${glyphs.cursor}</svg></button>
          </div>
        </div>
        <div class="sheet">
          <div class="track"></div>
          <div>
            <button class="group"><span>General</span>${up}</button>
            <table><tbody>${properties.map(([k, kind, v]) => html`<tr><th scope="row">${k}</th><td><div class="val">
              ${kind === "swatch" ? html`<span class="sw"></span>` : kind === "rule" ? html`<span class="rule"></span>` : ""}${v}</div></td></tr>`)}</tbody></table>
            <button class="group"><span>3D Visualization</span>${up}</button>
            <table><tbody><tr><th scope="row">Material</th><td><div class="val">ByLayer</div></td></tr></tbody></table>
          </div>
        </div>
      </div>
      <nav class="rail short"><button class="on">Design</button><button>Objec...</button><button>Display</button><button>Displa...</button>
        <span class="stub"></span><span class="stub"></span><span class="stub"></span></nav>
    </section>`;
  }

  private drawing() {
    return html`<div class="canvas">
      <svg class="plot" fill="none">
        ${contours.map(([d, major]) => svg`<path d=${d} stroke=${major ? "#c4161f" : "#9fe89a"}/>`)}
        <path d="M237 53L570 188 341 378 235 297 235 170z" stroke="#eeeeaa"/>
        ${nodes.map(([x, y, n, z, lx]) => svg`<path d="M${x - 4} ${y - 4}h8v8h-8z" stroke="#c4161f"/>
          <text class="pt" x=${lx} y=${y + 5}>${z}</text><text class="pt" x=${lx} y=${y - 7}>${n}</text>`)}
        <text class="pt" x="241" y="60">13</text>
        <path d="M224 182h16M232 174v16M229 179h6v6h-6zM659 3h16M667 -5v14M663 -1h8v8h-8z" stroke="#c4161f"/>
        <path d="M701 200h62M732 170v62" stroke="#e8e8e8"/>
      </svg>
      <div class="vp"><button>[−]</button><button>[Top]</button><button>[2D Wireframe]</button></div>
      <svg class="vp-icon" width="18" height="18" viewBox="0 0 18 18" fill="none" stroke="#eee" stroke-width="1.3"><path d="M1 7V1h4v3H1M8 6l5-4M9 1h5v4M3.500 10a2.500 2.500 0 1 0 .1 0M1 16h6M9 9h5v3H9zM9 15h7M10 12l5 4"/></svg>
      <div class="docwin">
        <button aria-label="Minimize"><svg width="10" height="10"><path d="M0 7h10" stroke="#eee" stroke-width="3"/></svg></button>
        <button aria-label="Restore"><svg width="11" height="11" fill="none" stroke="#eee"><path d="M3 3V1h7v6H8M1 4h6v6H1z" stroke-width="1.5"/></svg></button>
        <button aria-label="Close"><svg width="9" height="9"><path d="M1 1l7 7M8 1L1 8" stroke="#eee" stroke-width="2"/></svg></button>
      </div>
      <svg class="cube" width="92" height="92" viewBox="0 0 92 92">
        <circle cx="46" cy="45" r="36" fill="none" stroke="#474b52" stroke-width="7"/>
        <path d="M29 28h34v34H29z" fill="#b4b7b6" stroke="#d0d2d1"/><path d="M34 33h24v24H34z" fill="#a6a9a8"/>
        <text x="46" y="13">N</text><text x="46" y="87">S</text><text x="9" y="50">W</text><text x="83" y="50">E</text><text class="top" x="46" y="49">TOP</text>
      </svg>
      <button class="wcs"><span>WCS</span><svg width="11" height="5"><path d="M1 1h9L5 4z" fill="none" stroke="#d8dadc"/></svg></button>
      <div class="navbar">
        <button aria-label="Steering wheel"><svg width="24" height="26" fill="none" stroke="#464a4e"><circle cx="11" cy="14" r="8.5"/><circle cx="11" cy="14" r="4"/><path d="M11 5h11v9a11 11 0 0 1-5 9"/><path d="M5 8l3 3M14 17l3 3M17 8l-3 3M5 20l3-3"/></svg></button>
        <button aria-label="Pan"><svg width="24" height="26" viewBox="0 -4 24 26" fill="none" stroke="#464a4e" stroke-width="1.5"><path d="M7 21L2 13c-1-2 1-3 2-1l3 3V6c0-2 2-2 2 0v6V4c0-2 3-2 3 0v8-7c0-2 3-2 3 0v8-5c0-2 2-2 2 0v7c0 4-2 6-3 8z" transform="translate(2 -2)"/></svg></button>
        <button aria-label="Zoom"><svg width="24" height="26" fill="none" stroke="#464a4e" stroke-width="1.5"><path d="M2 4l14 15M2 19L18 4M2 4h4M2 4v4M18 4h-4M18 4v4"/><circle cx="17" cy="19" r="4" fill="#5d6266"/><path d="M20 22l4 4"/></svg></button>
        <button aria-label="Orbit"><svg width="24" height="26" fill="none" stroke="#464a4e" stroke-width="1.5"><ellipse cx="12" cy="15" rx="10" ry="4"/><path d="M10 8v13h4V8M8 8l4-5 4 5z" fill="#5d6266"/></svg></button>
        <button aria-label="Show motion"><svg width="24" height="26" fill="none" stroke="#464a4e" stroke-width="1.5"><path d="M2 3h5v5H2zM10 3h5v5h-5zM18 3h5v5h-5zM2 11h16v12H2z"/><path d="M7 13v8l6-4z" fill="#464a4e"/></svg></button>
      </div>
      <svg class="ucs" width="90" height="90" fill="none" stroke="#eee"><path d="M14.5 71V26M19 75.5h45M10.5 71.5h9v9h-9z"/><text x="17" y="20" stroke="none">Y</text><text x="69" y="74" stroke="none">X</text></svg>
    </div>
    <div class="sheets">
      ${["M1 0v7M7 0v7L3 3.5z", "M6 0v7L2 3.5z", "M1 0v7l4-3.5z", "M6 0v7M0 0v7l4-3.5z"].map((d) => html`<button class="nav" aria-label="Scroll tabs"><svg width="7" height="7" fill="#777" stroke="#777" stroke-width=".8"><path d=${d}/></svg></button>`)}
      <button class="model">Model</button>
      ${["Layout1", "Layout2", "Ansi B"].map((n) => html`<button class="leaf">${n}<svg width="7" height="14" stroke="#222"><path d="M1 14L7 0"/></svg></button>`)}
    </div>`;
  }

  private statusBar() {
    const b = (label: string, art: SVGTemplateResult, on = false) =>
      html`<button class=${classMap({ on })} aria-label=${label}><svg width="17" height="17" viewBox="0 0 18 18" fill="none" stroke="#333">${art}</svg></button>`;
    const scaleIcon = svg`<path d="M9 2l2 6 6 7-3 1-5-5-5 5-3-1 6-7z" fill="#f4f4f4"/>`;
    return html`<footer class="status">
      <span class="lead"></span>
      <div class="run">${statusLeft.map(([l, on, a]) => b(l, a, on))}</div>
      <span class="grow"></span>
      <button class="wide">MODEL</button>
      ${b("Quick view layouts", svg`<path d="M2 1h14v12H2z" fill="#fff"/><path d="M5 3v8h7zM1 16h16"/>`)}
      ${b("Quick view drawings", svg`<path d="M1 2h7v9H1zM10 2h7v9h-7z" fill="#fff"/><path d="M1 15h16" stroke-width="2"/>`)}
      <span class="space"></span>
      <button class="wide"><svg width="17" height="17" viewBox="0 0 18 18" stroke="#333">${scaleIcon}</svg>1" = 60'${caret(7)}</button>
      ${b("Annotation visibility", svg`${scaleIcon}<circle cx="14" cy="11" r="3" fill="#f4d34c" stroke="#a86c10"/>`)}
      ${b("Auto scale", svg`<g opacity=".4">${scaleIcon}</g>`)}
      <span class="thin"></span>
      ${b("Workspace switching", svg`${glyphs.gear}<path d="M17 12v5h-5z" fill="#111"/>`)}
      ${b("Lock", svg`<path d="M2 8h9v8H2z" fill="#eee"/><path d="M9 8V5c0-4 7-4 7 0v3M6.5 10v4"/>`)}
      ${b("Hardware acceleration", svg`<path d="M1 3h14v5H1z" fill="#bbb"/><circle cx="13" cy="12" r="3" fill="#9bd" stroke="#27a"/>`)}
      <span class="thin"></span>
      <div class="tray">
        <svg width="17" height="17" viewBox="0 0 18 18" fill="none" stroke="#333"><path d="M2 2h11v12H2z" fill="#fff"/><path d="M5 5h5v6H5z"/><path d="M10 10h7v6h-7z" fill="#f4b73c"/></svg>
        <svg width="17" height="17" viewBox="0 0 18 18" fill="none" stroke="#333"><path d="M2 2h10l2 4v5H2z" fill="#3c7fb5"/><path d="M5 9h9v6H5z" fill="#f0d24c"/><path d="M7 13l3 3 7-7" stroke="#4a4" stroke-width="2.5"/></svg>
        ${icon("bulb", 17)}
      </div>
      <button class="slim" aria-label="Tray settings">${caret(4)}</button>
      ${b("Clean screen", svg`<path d="M1 2h16v13H1z" fill="#f4f4f4"/><path d="M1 4h16" stroke-width="2"/>`)}
      <svg width="12" height="18"><path d="M11 8l-8 9M11 13l-4 4" stroke="#ccc"/></svg>
    </footer>`;
  }

  render() {
    return html`
      ${this.titleBar()}
      <nav class="tabs">
        ${menuTabs.map((t, i) => html`<button class=${classMap({ on: i === 0 })}>${t}</button>`)}
        <button class="min" aria-label="Minimize ribbon"><svg width="13" height="7"><path d="M0 0h13v7H0z" fill="#eee"/><path d="M3.5 5h6l-3-3z" fill="#333"/></svg>${caret(4)}</button>
      </nav>
      ${this.ribbon()}
      <main class="work">
        <div class="dock">${this.toolspace()}${this.propertiesPalette()}</div>
        <div class="right">
          <div class="upper">
            <div class="doc">${this.drawing()}</div>
            <nav class="side"><span class="hold"></span>${sideTools.map((a, i) => a ? html`<button aria-label=${"Survey tool " + (i + 1)}><svg width="18" height="18" viewBox="0 0 18 18" fill="none" stroke="#333">${a}</svg></button>` : html`<hr />`)}</nav>
          </div>
          <div class="cmd"><span class="handle"></span><div>
            <pre class="log">(-1.59875e+006 1.6979e+007 0.0)
Specify next point or [Undo]:</pre>
            <input aria-label="Command line" value=">>>>Enter northing <16978980.0000>:" />
          </div></div>
        </div>
      </main>
      ${this.statusBar()}`;
  }
}
